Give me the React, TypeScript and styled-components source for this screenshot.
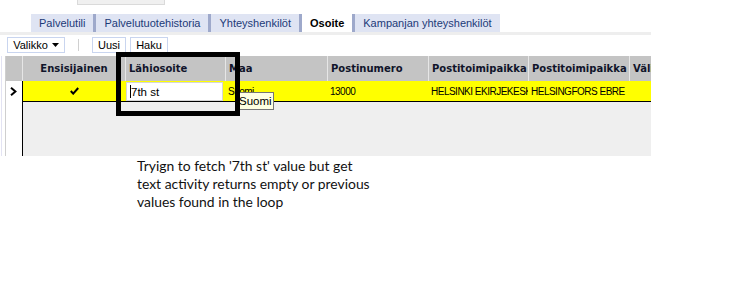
import * as React from "react";
import styled, { createGlobalStyle } from "styled-components";

const GlobalStyle = createGlobalStyle`
  html, body {
    margin: 0;
    padding: 0;
    background: #ffffff;
  }
  body {
    font-family: "Liberation Sans", Arial, sans-serif;
  }
`;

const Page = styled.div`
  position: relative;
  width: 755px;
  height: 301px;
  overflow: hidden;
`;

const Panel = styled.div`
  width: 651px;
  display: flex;
  flex-direction: column;
`;

const TopStub = styled.div`
  margin-left: 77px;
  width: 88px;
  height: 5px;
  box-sizing: border-box;
  background: #f0f0f0;
  border: 1px solid #dadada;
  border-top: none;
`;

const TabStrip = styled.div`
  display: flex;
  margin-top: 9px;
  padding-left: 31px;
  height: 18px;
`;

const Tab = styled.div<{ $active?: boolean; $first?: boolean }>`
  display: flex;
  align-items: center;
  padding: 0 8px;
  font-size: 11px;
  color: ${(p) => (p.$active ? "#000000" : "#1c3a78")};
  font-weight: ${(p) => (p.$active ? "bold" : "normal")};
  background: ${(p) => (p.$active ? "#ffffff" : "#dfe4f3")};
  border-left: ${(p) => (p.$first ? "none" : "3px solid #9ea9cb")};
  white-space: nowrap;
`;

const Divider = styled.div`
  height: 3px;
  background: #eeeeee;
`;

const Toolbar = styled.div`
  display: flex;
  align-items: center;
  margin-top: 2px;
  padding-left: 7px;
  height: 16px;
`;

const ToolButton = styled.div<{ $w: number; $gap?: number }>`
  box-sizing: border-box;
  width: ${(p) => p.$w}px;
  height: 16px;
  margin-left: ${(p) => p.$gap ?? 0}px;
  border: 1px solid #c9d5ef;
  background: #ffffff;
  display: flex;
  align-items: center;
  justify-content: center;
  gap: 4px;
  font-size: 11px;
  color: #000;
`;

const ToolSep = styled.div`
  width: 1px;
  height: 12px;
  background: #d0d0d0;
  margin: 0 13px 0 13px;
`;

const GridArea = styled.div`
  margin-top: 3px;
  margin-left: 1px;
  padding-left: 3px;
  border-left: 1px solid #e3e3f3;
`;

const Grid = styled.div`
  border-left: 1px solid #cfcfcf;
  height: 100px;
  display: flex;
  flex-direction: column;
`;

const HeaderRow = styled.div`
  display: flex;
  height: 25px;
  background: #c4c4c4;
`;

const HeadCell = styled.div<{ $w?: number; $center?: boolean; $first?: boolean }>`
  box-sizing: border-box;
  ${(p) => (p.$w ? `width: ${p.$w}px; flex: none;` : "flex: 1;")}
  border-left: ${(p) => (p.$first ? "none" : "1px solid #e6e6e6")};
  display: flex;
  align-items: center;
  justify-content: ${(p) => (p.$center ? "center" : "flex-start")};
  padding-left: ${(p) => (p.$center ? 0 : 3)}px;
  font-family: "DejaVu Sans", Verdana, sans-serif;
  font-weight: bold;
  font-size: 10px;
  color: #10142a;
  white-space: nowrap;
  overflow: hidden;
`;

const GridBody = styled.div`
  flex: 1;
  display: flex;
`;

const IndicatorCol = styled.div`
  width: 16px;
  background: #ffffff;
`;

const Indicator = styled.div`
  height: 20px;
  display: flex;
  align-items: center;
  padding-left: 4px;
`;

const DataCol = styled.div`
  flex: 1;
  border-left: 1px solid #000;
  background: #efefef;
  overflow: hidden;
`;

const DataRow = styled.div`
  display: flex;
  height: 20px;
  background: #ffff00;
  border-bottom: 1px solid #000;
`;

const Cell = styled.div<{ $w?: number; $center?: boolean; $flush?: boolean }>`
  box-sizing: border-box;
  ${(p) => (p.$w ? `width: ${p.$w}px; flex: none;` : "flex: 1;")}
  display: flex;
  align-items: center;
  justify-content: ${(p) => (p.$center ? "center" : "flex-start")};
  padding-left: ${(p) => (p.$center || p.$flush ? 0 : 3)}px;
  font-size: 10px;
  letter-spacing: -0.5px;
  color: #000;
  white-space: nowrap;
  overflow: hidden;
`;

const Editor = styled.div`
  box-sizing: border-box;
  margin: 1px 2px 0 1px;
  flex: 1;
  height: 19px;
  background: #ffffff;
  border: 1px solid #d6d6d6;
  display: flex;
  align-items: center;
  padding-left: 3px;
  font-size: 11.5px;
  letter-spacing: 0;
  color: #000;
`;

const Caret = styled.span`
  display: inline-block;
  width: 1px;
  height: 13px;
  background: #000;
`;

const Note = styled.div`
  margin-left: 137px;
  margin-top: 1px;
  font-family: Lato, "Open Sans", sans-serif;
  font-size: 13.9px;
  line-height: 18px;
  color: #111111;
`;

const MarkBox = styled.div`
  position: absolute;
  left: 116px;
  top: 52px;
  width: 124px;
  height: 64px;
  box-sizing: border-box;
  border: 5px solid #000;
  z-index: 3;
`;

const Tooltip = styled.div`
  position: absolute;
  left: 235px;
  top: 92px;
  width: 39px;
  height: 18px;
  box-sizing: border-box;
  background: #ffffe1;
  border: 1px solid #767676;
  font-size: 11.5px;
  line-height: 16px;
  padding-left: 3px;
  color: #000;
  z-index: 2;
`;

const Check = () => (
  <svg width="9" height="8" viewBox="0 0 9 8">
    <polyline points="0.8,4 3.2,6.6 8.2,1" fill="none" stroke="#000" strokeWidth="2" />
  </svg>
);

const Chevron = () => (
  <svg width="7" height="9" viewBox="0 0 7 9">
    <polyline points="1,0.8 5.4,4.5 1,8.2" fill="none" stroke="#000" strokeWidth="2" />
  </svg>
);

const DropArrow = () => (
  <svg width="7" height="4" viewBox="0 0 7 4">
    <polygon points="0,0 7,0 3.5,4" fill="#000" />
  </svg>
);

const tabs = ["Palvelutili", "Palvelutuotehistoria", "Yhteyshenkilöt", "Osoite", "Kampanjan yhteyshenkilöt"];

const columns = [
  { title: "Ensisijainen", w: 103, center: true },
  { title: "Lähiosoite", w: 100 },
  { title: "Maa", w: 102 },
  { title: "Postinumero", w: 101 },
  { title: "Postitoimipaikka", w: 100 },
  { title: "Postitoimipaikka", w: 101 },
  { title: "Välitysosoite" },
];

export default function App() {
  return (
    <Page>
      <GlobalStyle />
      <Panel>
        <TopStub />
        <TabStrip>
          {tabs.map((t, i) => (
            <Tab key={t} $first={i === 0} $active={t === "Osoite"}>
              {t}
            </Tab>
          ))}
        </TabStrip>
        <Divider />
        <Toolbar>
          <ToolButton $w={58}>
            Valikko <DropArrow />
          </ToolButton>
          <ToolSep />
          <ToolButton $w={34}>Uusi</ToolButton>
          <ToolButton $w={38} $gap={4}>
            Haku
          </ToolButton>
        </Toolbar>
        <GridArea>
          <Grid>
            <HeaderRow>
              <HeadCell $w={16} $first />
              {columns.map((c, i) => (
                <HeadCell key={i} $w={c.w} $center={c.center}>
                  {c.title}
                </HeadCell>
              ))}
            </HeaderRow>
            <GridBody>
              <IndicatorCol>
                <Indicator>
                  <Chevron />
                </Indicator>
              </IndicatorCol>
              <DataCol>
                <DataRow>
                  <Cell $w={102} $center>
                    <Check />
                  </Cell>
                  <Cell $w={100} $flush>
                    <Editor>
                      <Caret />
                      7th st
                    </Editor>
                  </Cell>
                  <Cell $w={102}>Suomi</Cell>
                  <Cell $w={101}>13000</Cell>
                  <Cell $w={100}>HELSINKI EKIRJEKESKUS</Cell>
                  <Cell $w={101}>HELSINGFORS EBRE</Cell>
                  <Cell />
                </DataRow>
              </DataCol>
            </GridBody>
          </Grid>
        </GridArea>
        <Note>
          Tryign to fetch '7th st' value but get
          <br />
          text activity returns empty or previous
          <br />
          values found in the loop
        </Note>
      </Panel>
      <Tooltip>Suomi</Tooltip>
      <MarkBox />
    </Page>
  );
}
